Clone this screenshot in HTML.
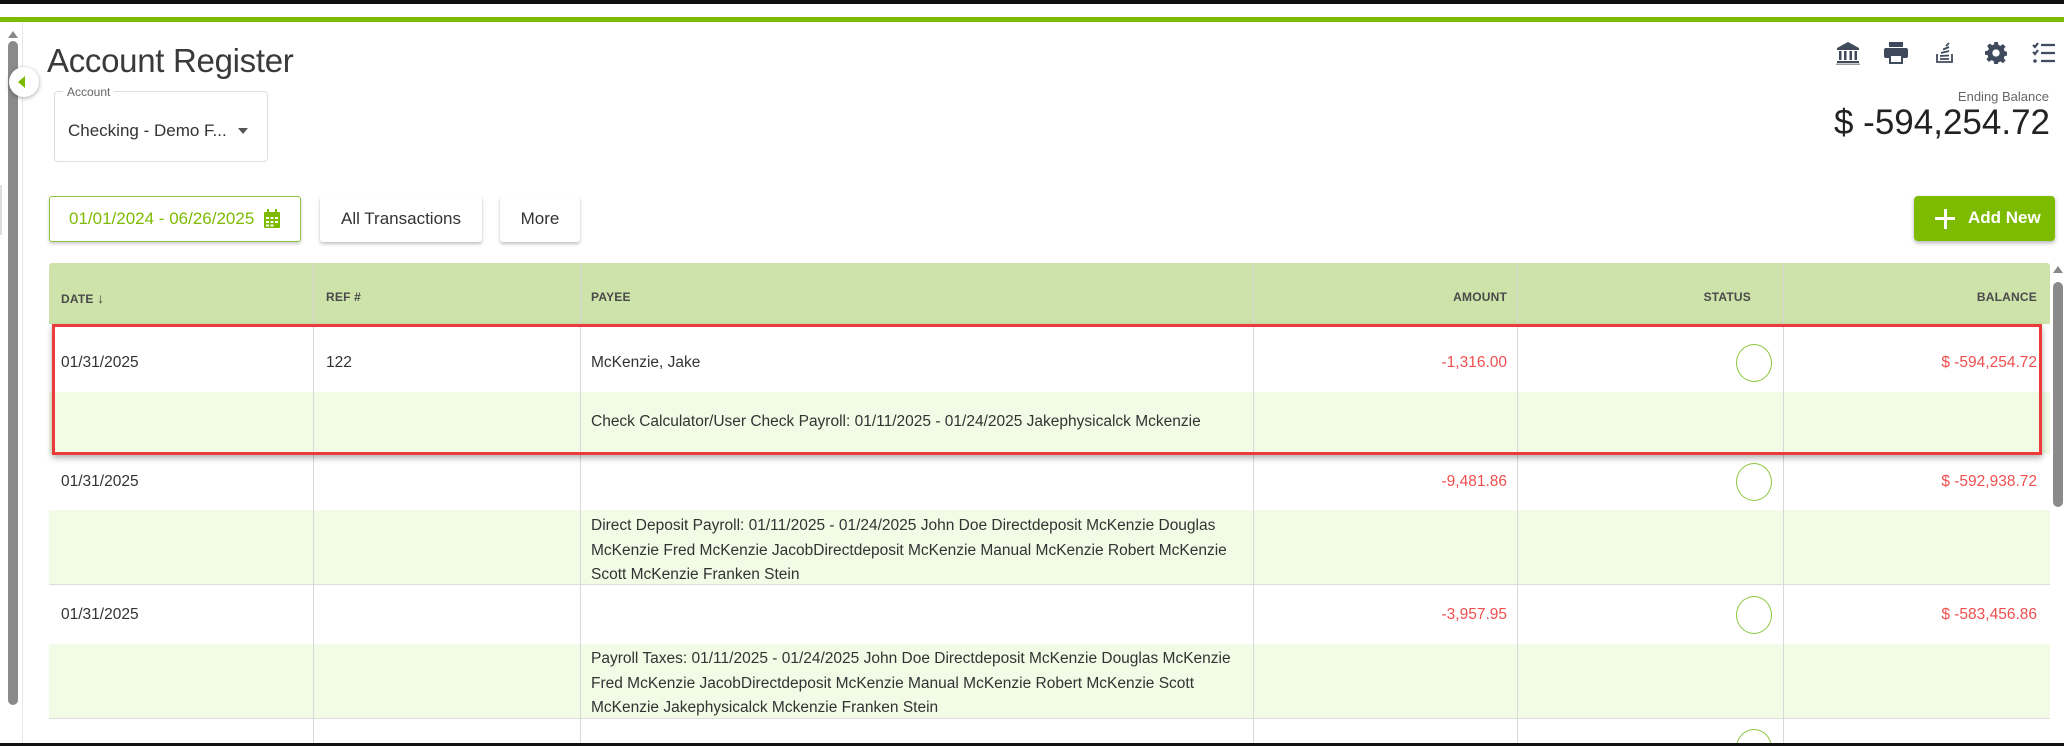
<!DOCTYPE html>
<html><head><meta charset="utf-8"><style>
*{margin:0;padding:0;box-sizing:border-box}
html,body{width:2064px;height:746px;overflow:hidden}
body{background:#fff;font-family:"Liberation Sans",sans-serif;color:#333;position:relative}
.a{position:absolute}
.t{position:absolute;white-space:nowrap}
.hdr{font-size:12px;font-weight:bold;color:#4a4a4a;letter-spacing:.2px}
.cell{font-size:15.5px;color:#333}
.red{color:#ef4f4f;font-size:15.5px}
.vl{position:absolute;width:1px;background:#d8d8d8}
.circ{position:absolute;width:36px;height:38px;border:1.5px solid #8cc63f;border-radius:50%}
.btn{position:absolute;background:#fff;border-radius:3px;box-shadow:0 2px 3px rgba(0,0,0,.25);font-size:17px;color:#333;text-align:center;line-height:46px;height:46px}
</style></head><body>
<div class="a" style="left:0;top:0;width:2064px;height:4px;background:#111"></div>
<div class="a" style="left:0;top:17px;width:2064px;height:5px;background:#7dbb00"></div>
<div class="a" style="left:8px;top:31px;width:0;height:0;border-left:5px solid transparent;border-right:5px solid transparent;border-bottom:7px solid #888"></div>
<div class="a" style="left:8px;top:41px;width:10px;height:664px;background:#8a8a8a;border-radius:5px"></div>
<div class="a" style="left:22px;top:22px;width:1px;height:721px;background:#e6e6e6"></div>
<div class="a" style="left:0;top:185px;width:2px;height:50px;background:#ddd"></div>
<div class="a" style="left:9px;top:67px;width:30px;height:30px;border-radius:50%;background:#fff;box-shadow:0 1px 4px rgba(0,0,0,.35)"></div>
<div class="a" style="left:18px;top:76px;width:0;height:0;border-top:6px solid transparent;border-bottom:6px solid transparent;border-right:7px solid #7dbb00"></div>

<div class="t" style="left:47px;top:42px;font-size:33px;color:#3a3a3a;letter-spacing:-0.3px">Account Register</div>
<div class="a" style="left:54px;top:91px;width:214px;height:71px;border:1px solid #ddd;border-radius:4px"></div>
<div class="t" style="left:63px;top:85px;font-size:12px;color:#666;background:#fff;padding:0 4px">Account</div>
<div class="t" style="left:68px;top:121px;font-size:17px;color:#333">Checking - Demo F...</div>
<div class="a" style="left:238px;top:128px;border-left:5px solid transparent;border-right:5px solid transparent;border-top:6px solid #555"></div>

<div class="a" style="left:49px;top:196px;width:252px;height:46px;border:1.5px solid #8cc63f;border-radius:3px;box-shadow:0 2px 3px rgba(0,0,0,.2)"></div>
<div class="t" style="left:69px;top:209px;font-size:17px;color:#7dbb00">01/01/2024 - 06/26/2025</div>
<svg class="a" style="left:264px;top:209px" width="16" height="19" viewBox="0 0 16 19"><rect x="0" y="3" width="16" height="16" rx="1" fill="#7dbb00"/><rect x="3" y="0" width="2" height="5" fill="#7dbb00"/><rect x="11" y="0" width="2" height="5" fill="#7dbb00"/><g fill="#fff"><rect x="2" y="8" width="3" height="2"/><rect x="6.5" y="8" width="3" height="2"/><rect x="11" y="8" width="3" height="2"/><rect x="2" y="12" width="3" height="2"/><rect x="6.5" y="12" width="3" height="2"/><rect x="11" y="12" width="3" height="2"/><rect x="2" y="15.5" width="3" height="2"/><rect x="6.5" y="15.5" width="3" height="2"/></g></svg>
<div class="btn" style="left:320px;top:196px;width:162px">All Transactions</div>
<div class="btn" style="left:500px;top:196px;width:80px">More</div>
<div class="a" style="left:1914px;top:196px;width:141px;height:45px;background:#7dbb00;border-radius:4px;box-shadow:0 2px 4px rgba(0,0,0,.3)"></div>
<div class="a" style="left:1935px;top:217px;width:20px;height:3px;background:#fff"></div>
<div class="a" style="left:1943.5px;top:208.5px;width:3px;height:20px;background:#fff"></div>
<div class="t" style="left:1968px;top:208px;font-size:17px;color:#fff;font-weight:bold">Add New</div>

<svg class="a" style="left:1836px;top:41px" width="24" height="24" viewBox="0 0 24 24" fill="#3f4a5c"><path d="M12 1 L23 7 L23 9 L1 9 L1 7 Z"/><rect x="3" y="10" width="2.5" height="9"/><rect x="8" y="10" width="2.5" height="9"/><rect x="13.5" y="10" width="2.5" height="9"/><rect x="18.5" y="10" width="2.5" height="9"/><rect x="1" y="20" width="22" height="2"/><rect x="0" y="22.5" width="24" height="1.5" fill="#999"/></svg>
<svg class="a" style="left:1884px;top:42px" width="24" height="22" viewBox="0 0 24 22" fill="#3f4a5c"><rect x="5" y="0" width="14" height="5"/><rect x="0" y="6" width="24" height="10" rx="2"/><rect x="5" y="12" width="14" height="10" fill="#3f4a5c"/><rect x="7" y="14" width="10" height="6" fill="#fff"/></svg>
<svg class="a" style="left:1935px;top:42px" width="20" height="22" viewBox="0 0 20 22" fill="none" stroke="#3f4a5c" stroke-width="1.8"><path d="M2 12 V20 H17 V12"/><path d="M5 17 H14 M5 14 L14 13.5 M6 11 L14 9 M8 7.5 L14 5 M11 4 L14 1"/></svg>
<svg class="a" style="left:1985px;top:42px" width="22" height="22" viewBox="0 0 24 24" fill="#3f4a5c"><path d="M10 0h4l.6 3.2 2.3 1 2.7-1.9 2.8 2.8-1.9 2.7 1 2.3 3.2.6v4l-3.2.6-1 2.3 1.9 2.7-2.8 2.8-2.7-1.9-2.3 1L14 24h-4l-.6-3.2-2.3-1-2.7 1.9-2.8-2.8 1.9-2.7-1-2.3L0 14v-4l3.2-.6 1-2.3-1.9-2.7 2.8-2.8 2.7 1.9 2.3-1zM12 8a4 4 0 100 8 4 4 0 000-8z"/></svg>
<svg class="a" style="left:2032px;top:42px" width="24" height="22" viewBox="0 0 24 22" fill="none" stroke="#3f4a5c" stroke-width="2.2"><path d="M1 3 L3 5 L6 1 M1 10 L3 12 L6 8"/><path d="M9 3 H23 M9 11 H23 M9 19 H23"/><circle cx="3" cy="19" r="1.8" fill="#3f4a5c" stroke="none"/></svg>

<div class="t" style="right:15px;top:89px;font-size:13px;color:#666">Ending Balance</div>
<div class="t" style="right:14px;top:103px;font-size:35px;color:#222">$ -594,254.72</div>

<div class="a" style="left:49px;top:263px;width:2001px;height:61px;background:#cde3aa;border-radius:3px 3px 0 0"></div>
<div class="a" style="left:49px;top:324px;width:2001px;height:68px;background:#fff"></div>
<div class="a" style="left:49px;top:392px;width:2001px;height:62px;background:#f2fbe5"></div>
<div class="a" style="left:49px;top:454px;width:2001px;height:56px;background:#fff"></div>
<div class="a" style="left:49px;top:510px;width:2001px;height:74px;background:#f2fbe5"></div>
<div class="a" style="left:49px;top:584px;width:2001px;height:1px;background:#ddd"></div>
<div class="a" style="left:49px;top:585px;width:2001px;height:59px;background:#fff"></div>
<div class="a" style="left:49px;top:644px;width:2001px;height:74px;background:#f2fbe5"></div>
<div class="a" style="left:49px;top:718px;width:2001px;height:1px;background:#ddd"></div>
<div class="vl" style="left:313px;top:263px;height:480px"></div>
<div class="vl" style="left:580px;top:263px;height:480px"></div>
<div class="vl" style="left:1253px;top:263px;height:480px"></div>
<div class="vl" style="left:1517px;top:263px;height:480px"></div>
<div class="vl" style="left:1783px;top:263px;height:480px"></div>

<div class="t hdr" style="left:61px;top:290px">DATE <span style="font-weight:normal;font-size:14px">&#8595;</span></div>
<div class="t hdr" style="left:326px;top:290px">REF #</div>
<div class="t hdr" style="left:591px;top:290px">PAYEE</div>
<div class="t hdr" style="right:557px;top:290px">AMOUNT</div>
<div class="t hdr" style="right:313px;top:290px">STATUS</div>
<div class="t hdr" style="right:27px;top:290px">BALANCE</div>

<div class="t cell" style="left:61px;top:354px">01/31/2025</div>
<div class="t cell" style="left:326px;top:354px">122</div>
<div class="t cell" style="left:591px;top:354px">McKenzie, Jake</div>
<div class="t red" style="right:557px;top:354px">-1,316.00</div>
<div class="circ" style="left:1736px;top:344px"></div>
<div class="t red" style="right:27px;top:354px">$ -594,254.72</div>
<div class="t cell" style="left:591px;top:413px">Check Calculator/User Check Payroll: 01/11/2025 - 01/24/2025 Jakephysicalck Mckenzie</div>

<div class="t cell" style="left:61px;top:473px">01/31/2025</div>
<div class="t red" style="right:557px;top:473px">-9,481.86</div>
<div class="circ" style="left:1736px;top:463px"></div>
<div class="t red" style="right:27px;top:473px">$ -592,938.72</div>
<div class="t cell" style="left:591px;top:514px;line-height:24.5px">Direct Deposit Payroll: 01/11/2025 - 01/24/2025 John Doe Directdeposit McKenzie Douglas<br>McKenzie Fred McKenzie JacobDirectdeposit McKenzie Manual McKenzie Robert McKenzie<br>Scott McKenzie Franken Stein</div>

<div class="t cell" style="left:61px;top:606px">01/31/2025</div>
<div class="t red" style="right:557px;top:606px">-3,957.95</div>
<div class="circ" style="left:1736px;top:596px"></div>
<div class="t red" style="right:27px;top:606px">$ -583,456.86</div>
<div class="t cell" style="left:591px;top:647px;line-height:24.5px">Payroll Taxes: 01/11/2025 - 01/24/2025 John Doe Directdeposit McKenzie Douglas McKenzie<br>Fred McKenzie JacobDirectdeposit McKenzie Manual McKenzie Robert McKenzie Scott<br>McKenzie Jakephysicalck Mckenzie Franken Stein</div>
<div class="a" style="left:1730px;top:726px;width:50px;height:17px;overflow:hidden"><div class="circ" style="left:6px;top:3px"></div></div>

<div class="a" style="left:52px;top:324px;width:1990px;height:131px;border:3px solid #ec3b3b;box-shadow:0 3px 6px rgba(0,0,0,.3)"></div>

<div class="a" style="left:2053px;top:266px;border-left:5px solid transparent;border-right:5px solid transparent;border-bottom:7px solid #888"></div>
<div class="a" style="left:2053px;top:282px;width:10px;height:225px;background:#8a8a8a;border-radius:5px"></div>
<div class="a" style="left:0;top:743px;width:2064px;height:3px;background:#111"></div>
</body></html>
